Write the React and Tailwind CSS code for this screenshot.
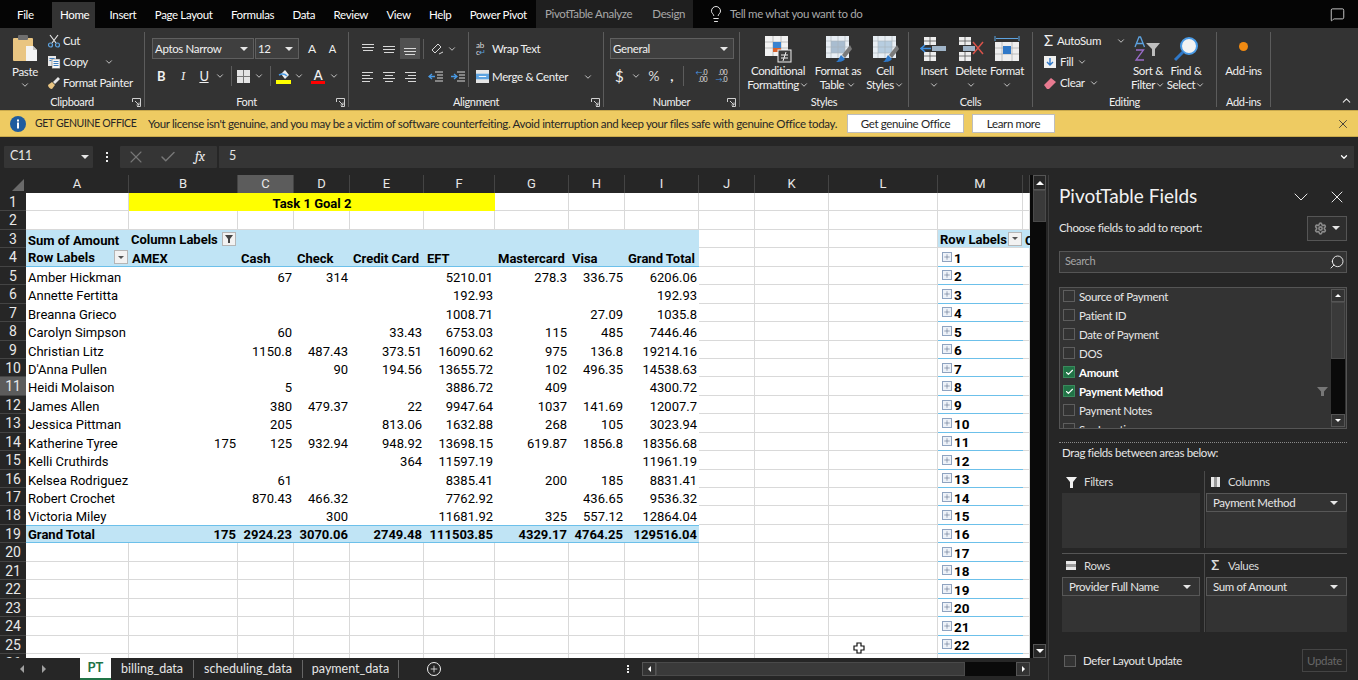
import { ChevronDown, X, Search, Settings, Check, Lightbulb, MessageSquare, ChevronUp, Plus } from 'lucide-react'

const UI = "font-['Lato',sans-serif] tracking-[-0.35px]"
const CELL = "font-['Roboto',sans-serif]"

const COLS = ['A', 'B', 'C', 'D', 'E', 'F', 'G', 'H', 'I', 'J', 'K', 'L', 'M', '']

const PIVOT = [
  ['Amber Hickman', '', '67', '314', '', '5210.01', '278.3', '336.75', '6206.06'],
  ['Annette Fertitta', '', '', '', '', '192.93', '', '', '192.93'],
  ['Breanna Grieco', '', '', '', '', '1008.71', '', '27.09', '1035.8'],
  ['Carolyn Simpson', '', '60', '', '33.43', '6753.03', '115', '485', '7446.46'],
  ['Christian Litz', '', '1150.8', '487.43', '373.51', '16090.62', '975', '136.8', '19214.16'],
  ["D'Anna Pullen", '', '', '90', '194.56', '13655.72', '102', '496.35', '14538.63'],
  ['Heidi Molaison', '', '5', '', '', '3886.72', '409', '', '4300.72'],
  ['James Allen', '', '380', '479.37', '22', '9947.64', '1037', '141.69', '12007.7'],
  ['Jessica Pittman', '', '205', '', '813.06', '1632.88', '268', '105', '3023.94'],
  ['Katherine Tyree', '175', '125', '932.94', '948.92', '13698.15', '619.87', '1856.8', '18356.68'],
  ['Kelli Cruthirds', '', '', '', '364', '11597.19', '', '', '11961.19'],
  ['Kelsea Rodriguez', '', '61', '', '', '8385.41', '200', '185', '8831.41'],
  ['Robert Crochet', '', '870.43', '466.32', '', '7762.92', '', '436.65', '9536.32'],
  ['Victoria Miley', '', '', '300', '', '11681.92', '325', '557.12', '12864.04'],
]
const TOTALS = ['Grand Total', '175', '2924.23', '3070.06', '2749.48', '111503.85', '4329.17', '4764.25', '129516.04']
const HEADS = ['Row Labels', 'AMEX', 'Cash', 'Check', 'Credit Card', 'EFT', 'Mastercard', 'Visa', 'Grand Total']

const FIELDS = [
  ['Source of Payment', false],
  ['Patient ID', false],
  ['Date of Payment', false],
  ['DOS', false],
  ['Amount', true],
  ['Payment Method', true],
  ['Payment Notes', false],
  ['Svc Location', false],
]

const TABS = ['File', 'Home', 'Insert', 'Page Layout', 'Formulas', 'Data', 'Review', 'View', 'Help', 'Power Pivot']

function Caret({ className = '' }) {
  return <ChevronDown size={10} strokeWidth={2} className={`text-[#e0e0e0] shrink-0 ${className}`} />
}

function Tri({ className = '' }) {
  return <span className={`inline-block w-0 h-0 border-x-[4px] border-x-transparent border-t-[4px] border-t-[#e6e6e6] ${className}`} />
}

function Launcher() {
  return (
    <svg width="9" height="9" viewBox="0 0 9 9" fill="none" stroke="#cfcfcf" className="shrink-0">
      <path d="M.5 4V.5H8.5V8.5H5M3 3l4 4M7 4.5V7H4.5" />
    </svg>
  )
}

function Group({ label, launcher, className, children }) {
  return (
    <div className={`flex flex-col h-full border-r border-[#5c5c5c] shrink-0 ${className}`}>
      <div className="flex-1 flex min-h-0">{children}</div>
      <div className="h-[10px] relative flex items-center justify-center text-[11px] text-[#f0f0f0]">
        {label}
        {launcher && <span className="absolute right-[3px] top-[1px] flex"><Launcher /></span>}
      </div>
    </div>
  )
}

function ClipboardIcon() {
  return (
    <svg width="26" height="28" viewBox="0 0 26 28">
      <rect x="1" y="4" width="20" height="23" rx="1" fill="#e9c582" />
      <rect x="6" y="1" width="10" height="5" rx="1" fill="#6f6f6f" />
      <path d="M14 12h7l4 4v11H14z" fill="#f4f4f4" />
      <path d="M21 12v4h4" fill="#c4c4c4" />
    </svg>
  )
}

function CutIcon() {
  return (
    <svg width="14" height="14" viewBox="0 0 14 14" fill="none">
      <path d="M3 1l6 8M11 1L5 9" stroke="#e4e4e4" strokeWidth="1.2" />
      <circle cx="3.5" cy="11" r="2" stroke="#5da3e0" strokeWidth="1.2" />
      <circle cx="10.5" cy="11" r="2" stroke="#5da3e0" strokeWidth="1.2" />
    </svg>
  )
}

function CopyIcon() {
  return (
    <svg width="14" height="14" viewBox="0 0 14 14">
      <rect x="1" y="1" width="8" height="10" fill="#e8e8e8" />
      <rect x="5" y="4" width="8" height="9.5" fill="#f8f8f8" stroke="#555" strokeWidth=".5" />
      <path d="M2.5 3.5h5M2.5 5.5h2M6.5 6.5h5M6.5 8.5h5M6.5 10.5h5" stroke="#3f7fbf" />
    </svg>
  )
}

function PainterIcon() {
  return (
    <svg width="14" height="14" viewBox="0 0 14 14">
      <path d="M1 9l4-3 3 3-3 4c-2 0-4-2-4-4z" fill="#e9c582" />
      <path d="M6 6l5-5 2 2-5 5z" fill="#e6e6e6" />
    </svg>
  )
}

function AlignLines({ widths, y = 3, gap = 3, color = '#d8d8d8' }) {
  return (
    <svg width="16" height="16" viewBox="0 0 16 16" stroke={color}>
      {widths.map(([a, b], i) => <path key={i} d={`M${a} ${y + i * gap + 0.5}H${b}`} />)}
    </svg>
  )
}

function IconBtn({ children, className = '' }) {
  return <div className={`w-[20px] h-[21px] flex items-center justify-center shrink-0 ${className}`}>{children}</div>
}

function CondFormatIcon() {
  return (
    <svg width="28" height="28" viewBox="0 0 28 28">
      <rect x="1" y="1" width="23" height="20" fill="#f2f2f2" />
      <path d="M1 7h23M1 13h23M9 1v20M17 1v20" stroke="#a9a9a9" strokeWidth=".7" />
      <rect x="9" y="7" width="8" height="6" fill="#3a83d0" />
      <rect x="9" y="13" width="8" height="4" fill="#d9622c" />
      <rect x="14" y="15" width="13" height="12" fill="#3c3c3c" stroke="#eee" />
      <path d="M17 20h7M17 23h7M22 17l-3 9" stroke="#eee" />
    </svg>
  )
}

function TableBrushIcon({ fill }) {
  return (
    <svg width="28" height="28" viewBox="0 0 28 28">
      <rect x="2" y="1" width="23" height="22" fill="#e8eef4" />
      <rect x="7" y="6" width="14" height="12" fill={fill} />
      <path d="M2 6h23M2 12h23M2 18h23M7 1v22M14 1v22M21 1v22" stroke="#a9b2bb" strokeWidth=".6" />
      <path d="M26 10l-8 10 3 3 7-9z" fill="#7a7a7a" />
      <path d="M17 20l4 4c-2 3-6 3-9 3 2-1 3-4 5-7z" fill="#2f78c8" />
    </svg>
  )
}

function InsertIcon() {
  return (
    <svg width="28" height="28" viewBox="0 0 28 28">
      <path d="M4 2h12v8H4zM4 17h12v9H4z" fill="#eeeeee" />
      <path d="M4 6h12M10 2v8M4 21h12M10 17v9" stroke="#555" strokeWidth=".8" />
      <rect x="12" y="11" width="14" height="5" fill="#9fb4c8" />
      <path d="M1 13.5h10M5 10l-4 3.5L5 17" stroke="#3e8ede" strokeWidth="1.6" fill="none" />
    </svg>
  )
}

function DeleteIcon() {
  return (
    <svg width="28" height="28" viewBox="0 0 28 28">
      <path d="M2 2h12v8H2zM2 17h12v9H2z" fill="#eeeeee" />
      <path d="M2 6h12M8 2v8M2 21h12M8 17v9" stroke="#555" strokeWidth=".8" />
      <rect x="6" y="11" width="12" height="5" fill="#9fb4c8" />
      <path d="M16 7l10 12M26 7L16 19" stroke="#d9534a" strokeWidth="1.5" />
    </svg>
  )
}

function FormatIcon() {
  return (
    <svg width="28" height="28" viewBox="0 0 28 28">
      <path d="M2 1v5M26 1v5M3 3.5h22" stroke="#5da3e0" fill="none" />
      <rect x="2" y="7" width="24" height="19" fill="#eeeeee" />
      <path d="M2 13h24M2 19h24M9 7v19M19 7v19" stroke="#a9a9a9" strokeWidth=".7" />
      <rect x="10" y="11" width="8" height="8" fill="#2f78c8" />
    </svg>
  )
}

function SortIcon() {
  return (
    <svg width="28" height="26" viewBox="0 0 28 26" className="shrink-0">
      <path d="M1 11L5 1h1.5l4 10M2.7 7.5h6" fill="none" stroke="#5da3e0" strokeWidth="1.3" />
      <path d="M2 14h7.5L2 24h8" fill="none" stroke="#9a6cc8" strokeWidth="1.3" />
      <path d="M12 7h14l-5 6v7h-3v-7z" fill="#bdbdbd" />
    </svg>
  )
}

function FindIcon() {
  return (
    <svg width="26" height="26" viewBox="0 0 26 26" className="shrink-0">
      <circle cx="16" cy="10" r="8" fill="#f2f2f2" stroke="#4a9be6" strokeWidth="2" />
      <path d="M10 16l-8 8" stroke="#2f78c8" strokeWidth="3" />
    </svg>
  )
}

function Ribbon() {
  return (
    <div className={`h-[82px] bg-[#333333] flex pt-[4px] pb-[3px] text-[#f0f0f0] text-[11.5px] leading-[14px] ${UI}`}>
      <Group label="Clipboard" launcher className="w-[145px]">
        <div className="w-[50px] flex flex-col items-center pt-[2px]">
          <ClipboardIcon />
          <div className="mt-[3px]">Paste</div>
          <Caret className="mt-[1px]" />
        </div>
        <div className="flex flex-col pt-[1px] gap-[6px] -ml-[3px]">
          <div className="flex items-center gap-[2px] h-[15px]"><CutIcon />Cut</div>
          <div className="flex items-center gap-[2px] h-[15px]"><CopyIcon />Copy<Caret className="ml-[14px]" /></div>
          <div className="flex items-center gap-[2px] h-[15px]"><PainterIcon />Format Painter</div>
        </div>
      </Group>

      <Group label="Font" launcher className="w-[204px]">
        <div className="flex flex-col pl-[7px] pt-[6px]">
          <div className="flex items-center gap-[1px]">
            <div className="w-[102px] h-[21px] bg-[#3f3f3f] border border-[#5f5f5f] flex items-center justify-between px-[2px] pr-[5px]">Aptos Narrow<Tri /></div>
            <div className="w-[44px] h-[21px] bg-[#3f3f3f] border border-[#5f5f5f] flex items-center justify-between px-[2px] pr-[5px]">12<Tri /></div>
            <span className="ml-[8px] text-[12px]">A</span>
            <span className="ml-[12px] text-[11px]">A</span>
          </div>
          <div className="flex items-center mt-[7px] h-[20px] text-[13px]">
            <span className="w-[18px] text-center font-bold">B</span>
            <span className="w-[26px] text-center italic font-serif">I</span>
            <span className="w-[16px] text-center underline">U</span>
            <Caret className="ml-[3px]" />
            <span className="w-px h-[20px] bg-[#5c5c5c] ml-[6px] mr-[5px]" />
            <svg width="13" height="13" viewBox="0 0 13 13"><rect width="13" height="13" fill="#e4e4e4" /><path d="M6.5 0v13M0 6.5h13" stroke="#777" /></svg>
            <Caret className="ml-[4px]" />
            <span className="w-px h-[20px] bg-[#5c5c5c] ml-[6px] mr-[5px]" />
            <svg width="16" height="16" viewBox="0 0 16 16"><path d="M5 6l4-4 4 5-4 4z" fill="#eee" /><path d="M3 7c4-2 6-1 8 1" stroke="#4a9be6" strokeWidth="1.5" fill="none" /><rect y="12" width="15" height="4" fill="#ffff00" /></svg>
            <Caret className="ml-[2px]" />
            <span className="ml-[7px] flex flex-col items-center w-[14px] leading-[12px] font-semibold text-[13px]">A<span className="w-[14px] h-[3px] bg-[#ff0000]" /></span>
            <Caret className="ml-[4px]" />
          </div>
        </div>
      </Group>

      <Group label="Alignment" launcher className="w-[255px]">
        <div className="w-[120px] flex flex-col pl-[9px] pt-[6px] h-[55px] border-r border-[#5c5c5c]">
          <div className="flex items-center h-[21px]">
            <IconBtn><AlignLines widths={[[2, 14], [2, 14], [3, 13]]} y={3} /></IconBtn>
            <IconBtn className="ml-[1px]"><AlignLines widths={[[2, 14], [2, 14], [3, 13]]} y={5} /></IconBtn>
            <IconBtn className="ml-[1px] bg-[#505050]"><AlignLines widths={[[2, 14], [2, 14], [3, 13]]} y={7} /></IconBtn>
            <span className="w-px h-[20px] bg-[#5c5c5c] mx-[3px]" />
            <IconBtn>
              <svg width="16" height="16" viewBox="0 0 16 16" fill="none" stroke="#d8d8d8"><path d="M3 9l6-6 3 3-6 6zM10 13l4-2" /></svg>
            </IconBtn>
            <Caret />
          </div>
          <div className="flex items-center h-[21px] mt-[7px]">
            <IconBtn><AlignLines widths={[[2, 13], [2, 10], [2, 13], [2, 10]]} y={3} gap={3} /></IconBtn>
            <IconBtn className="ml-[1px]"><AlignLines widths={[[2, 14], [4, 12], [2, 14], [4, 12]]} y={3} gap={3} /></IconBtn>
            <IconBtn className="ml-[1px]"><AlignLines widths={[[3, 14], [6, 14], [3, 14], [6, 14]]} y={3} gap={3} /></IconBtn>
            <span className="w-px h-[20px] bg-[#5c5c5c] mx-[3px]" />
            <IconBtn>
              <svg width="16" height="16" viewBox="0 0 16 16" fill="none"><path d="M7 3h8M9 6h6M9 9h6M7 12h8" stroke="#d8d8d8" /><path d="M1 7.5h6M4 5L1 7.5 4 10" stroke="#4a9be6" strokeWidth="1.3" /></svg>
            </IconBtn>
            <IconBtn className="ml-[2px]">
              <svg width="16" height="16" viewBox="0 0 16 16" fill="none"><path d="M7 3h8M9 6h6M9 9h6M7 12h8" stroke="#d8d8d8" /><path d="M1 7.5h6M4 5l3 2.5L4 10" stroke="#4a9be6" strokeWidth="1.3" /></svg>
            </IconBtn>
          </div>
        </div>
        <div className="flex flex-col pl-[7px] pt-[6px]">
          <div className="flex items-center h-[21px] gap-[3px] whitespace-nowrap">
            <span className="text-[8px] leading-[7px] w-[13px] text-[#dcdcdc]">ab<br />c<span className="text-[#5da3e0]">↵</span></span>
            Wrap Text
          </div>
          <div className="flex items-center h-[21px] mt-[7px] gap-[3px] whitespace-nowrap">
            <svg width="13" height="13" viewBox="0 0 14 14"><rect width="14" height="14" fill="#e6e6e6" /><rect y="4" width="14" height="6" fill="#5da3e0" /><path d="M3 7h8" stroke="#fff" /></svg>
            Merge &amp; Center
            <Caret className="ml-[12px]" />
          </div>
        </div>
      </Group>

      <Group label="Number" launcher className="w-[136px]">
        <div className="flex flex-col pl-[6px] pt-[6px]">
          <div className="w-[124px] h-[21px] bg-[#3f3f3f] border border-[#5f5f5f] flex items-center justify-between px-[2px] pr-[5px]">General<Tri /></div>
          <div className="flex items-center mt-[7px] h-[20px] text-[14px]">
            <span className="ml-[5px] text-[15px]">$</span>
            <Caret className="ml-[8px]" />
            <span className="ml-[7px] text-[#dcdcdc]">%</span>
            <span className="ml-[11px] font-bold">,</span>
            <span className="w-px h-[20px] bg-[#5c5c5c] mx-[10px]" />
            <span className="text-[7px] leading-[7px] text-[#e4e4e4] w-[13px] text-right"><span className="text-[#4a9be6]">←</span>.0<br />.00</span>
            <span className="text-[7px] leading-[7px] text-[#e4e4e4] w-[13px] ml-[7px] text-right">.00<br /><span className="text-[#4a9be6]">→</span>.0</span>
          </div>
        </div>
      </Group>

      <Group label="Styles" className="w-[169px]">
        <div className="flex w-full pt-[3px] text-center">
          <div className="w-[62px] ml-[7px] flex flex-col items-center"><CondFormatIcon /><div className="mt-[1px]">Conditional</div><div className="flex items-center whitespace-nowrap">Formatting<Caret /></div></div>
          <div className="w-[52px] flex flex-col items-center ml-[3px]"><TableBrushIcon fill="#a9bdd0" /><div className="mt-[1px] whitespace-nowrap">Format as</div><div className="flex items-center">Table<Caret className="ml-[2px]" /></div></div>
          <div className="w-[42px] flex flex-col items-center"><TableBrushIcon fill="#b7cde0" /><div className="mt-[1px]">Cell</div><div className="flex items-center">Styles<Caret /></div></div>
        </div>
      </Group>

      <Group label="Cells" className="w-[124px]">
        <div className="flex pt-[3px] pl-[6px] text-center">
          <div className="w-[38px] flex flex-col items-center"><InsertIcon /><div className="mt-[1px]">Insert</div><Caret className="mt-[2px]" /></div>
          <div className="w-[36px] flex flex-col items-center"><DeleteIcon /><div className="mt-[1px]">Delete</div><Caret className="mt-[2px]" /></div>
          <div className="w-[36px] flex flex-col items-center"><FormatIcon /><div className="mt-[1px]">Format</div><Caret className="mt-[2px]" /></div>
        </div>
      </Group>

      <Group label="Editing" className="w-[184px]">
        <div className="flex w-full pl-[11px]">
          <div className="flex flex-col w-[82px] pt-[1px] gap-[6px]">
            <div className="flex items-center gap-[4px] h-[15px]">
              <span className="text-[15px] w-[12px] leading-none">Σ</span>AutoSum<Caret className="ml-[11px]" />
            </div>
            <div className="flex items-center gap-[4px] h-[15px]">
              <svg width="12" height="12" viewBox="0 0 12 12"><rect width="12" height="12" fill="#f0f0f0" /><path d="M6 2v7M3 6l3 3 3-3" stroke="#2f78c8" strokeWidth="1.4" fill="none" /></svg>
              Fill<Caret />
            </div>
            <div className="flex items-center gap-[4px] h-[15px]">
              <svg width="12" height="12" viewBox="0 0 12 12"><path d="M0 8l7-7 5 4-7 7H3z" fill="#e87a90" /></svg>
              Clear<Caret />
            </div>
          </div>
          <div className="w-[44px] flex flex-col items-center pt-[4px] text-center">
            <SortIcon />
            <div className="mt-[2px] whitespace-nowrap">Sort &amp;</div>
            <div className="flex items-center">Filter<Caret /></div>
          </div>
          <div className="w-[38px] flex flex-col items-center pt-[4px] -ml-[3px] text-center">
            <FindIcon />
            <div className="mt-[2px] whitespace-nowrap">Find &amp;</div>
            <div className="flex items-center">Select<Caret /></div>
          </div>
        </div>
      </Group>

      <Group label="Add-ins" className="w-[54px]">
        <div className="flex flex-col items-center w-full pt-[10px]">
          <span className="w-[9px] h-[9px] rounded-full bg-[#f08a12]" />
          <div className="mt-[13px] whitespace-nowrap">Add-ins</div>
        </div>
      </Group>

      <div className="flex-1 flex items-end justify-end pr-[5px]">
        <ChevronUp size={13} className="text-[#e6e6e6]" />
      </div>
    </div>
  )
}

function Banner() {
  return (
    <div className={`h-[27px] bg-[#eecb62] border-y border-[#c9a94c] flex items-center text-[11.5px] text-[#262626] ${UI}`}>
      <svg width="16" height="16" viewBox="0 0 16 16" className="ml-[10px] shrink-0">
        <circle cx="8" cy="8" r="8" fill="#1f5c9e" />
        <rect x="7" y="6.5" width="2" height="6" fill="#fff" />
        <rect x="7" y="3.5" width="2" height="2" fill="#fff" />
      </svg>
      <span className="ml-[9px] w-[113px] whitespace-nowrap text-[10.5px]">GET GENUINE OFFICE</span>
      <span className="w-[699px] whitespace-nowrap overflow-hidden">Your license isn't genuine, and you may be a victim of software counterfeiting. Avoid interruption and keep your files safe with genuine Office today.</span>
      <button className="w-[117px] h-[19px] bg-white border border-[#bdbdbd] text-center">Get genuine Office</button>
      <button className="ml-[8px] w-[83px] h-[19px] bg-white border border-[#bdbdbd] text-center">Learn more</button>
      <X size={14} strokeWidth={1.5} className="ml-auto mr-[8px] text-[#333]" />
    </div>
  )
}

function FormulaBar() {
  return (
    <div className={`h-[38px] bg-[#262626] flex items-center pt-[1px] text-[12.5px] text-[#e6e6e6] ${UI}`}>
      <div className="w-[89px] h-[22px] ml-[4px] bg-[#353535] flex items-center justify-between pl-[6px] pr-[4px] rounded-[1px]">C11<Tri /></div>
      <div className="w-[27px] flex flex-col items-center">
        <span className="w-[2px] h-[2px] bg-[#eee] my-[1px]" />
        <span className="w-[2px] h-[2px] bg-[#eee] my-[1px]" />
        <span className="w-[2px] h-[2px] bg-[#eee] my-[1px]" />
      </div>
      <div className="w-[97px] h-[22px] bg-[#353535] flex items-center pl-[6px] rounded-[1px]">
        <X size={20} strokeWidth={1.3} className="text-[#777]" />
        <Check size={18} strokeWidth={2} className="ml-[13px] text-[#777]" />
        <span className="ml-[18px] font-serif italic text-[14px] text-[#eee]">fx</span>
      </div>
      <div className="flex-1 h-[22px] ml-[2px] mr-[4px] bg-[#353535] flex items-center pl-[10px] justify-between pr-[5px]">
        5
        <ChevronDown size={10} strokeWidth={3} className="text-white" />
      </div>
    </div>
  )
}

// one spreadsheet cell, grid lines are on by default
function Cell({ className = 'border-r border-b border-[#d9d9d9]', children }) {
  return <div className={`overflow-hidden whitespace-nowrap px-[2px] leading-[21px] ${className}`}>{children}</div>
}

function HeaderBtn({ filtered }) {
  return (
    <span className="w-[14px] h-[14px] -mt-[2px] bg-[#f2f2f2] border border-[#b5b5b5] flex items-center justify-center shrink-0">
      {filtered ? (
        <svg width="10" height="10" viewBox="0 0 10 10"><path d="M1 1h8L6 5v4H4V5z" fill="#444" /></svg>
      ) : (
        <span className="w-0 h-0 border-x-[3px] border-x-transparent border-t-[3px] border-t-[#555]" />
      )}
    </span>
  )
}

function PlusBox() {
  return (
    <span className="w-[10px] h-[10px] -mt-[2px] border border-[#8fa3c0] bg-[#eef2f8] shrink-0 mr-[2px] ml-[4px] flex items-center justify-center">
      <Plus size={8} strokeWidth={1.5} className="text-[#43567a]" />
    </span>
  )
}

function RowHead({ n }) {
  const on = n === 11
  return (
    <div className={`border-b border-[#444] text-center text-[14px] leading-[19px] text-[#e8e8e8] ${on ? 'bg-[#5c5c5c]' : 'bg-[#262626]'}`}>{n}</div>
  )
}

const BLANK_CELLS = [9, 10, 11]

function RightPart({ n }) {
  // columns J K L, then the second pivot in M and the sliver of N
  const m =
    n === 3 ? (
      <div className="bg-[#c0e4f5] border-b border-[#d9d9d9] flex items-center justify-between pt-[2px] pl-[2px] pr-[1px] font-bold">Row Labels<HeaderBtn /></div>
    ) : n >= 4 ? (
      <div className="border-b border-[#6cc0ea] flex items-center pt-[2px] font-bold text-[13.5px]"><PlusBox />{n - 3}</div>
    ) : (
      <Cell />
    )
  return (
    <>
      {BLANK_CELLS.map(c => <Cell key={c} />)}
      {m}
      {n === 3 ? <div className="bg-[#c0e4f5] font-bold leading-[21px] pl-[2px] overflow-hidden">C</div> : <Cell />}
    </>
  )
}

function Sheet() {
  const rows = []
  rows.push(
    <RowHead key="h1" n={1} />,
    <Cell key="a1" />,
    <div key="t1" className="col-span-5 bg-[#ffff00] text-center font-bold leading-[21px]">Task 1 Goal 2</div>,
    <Cell key="g1" />, <Cell key="h1c" />, <Cell key="i1" />,
    <RightPart key="r1" n={1} />,
  )
  rows.push(<RowHead key="h2" n={2} />)
  for (let c = 0; c < 9; c++) rows.push(<Cell key={`c2${c}`} />)
  rows.push(<RightPart key="r2" n={2} />)

  rows.push(
    <RowHead key="h3" n={3} />,
    <Cell key="a3" className="bg-[#c0e4f5] font-bold">Sum of Amount</Cell>,
    <div key="b3" className="col-span-8 bg-[#c0e4f5] font-bold pt-[2px] pl-[2px] flex items-center gap-[4px]">Column Labels<HeaderBtn filtered /></div>,
    <RightPart key="r3" n={3} />,
  )
  rows.push(<RowHead key="h4" n={4} />)
  HEADS.forEach((h, i) => rows.push(
    i === 0 ? (
      <div key={h + i} className="bg-[#c0e4f5] border-b border-[#6cc0ea] font-bold pt-[2px] pl-[2px] pr-[1px] flex items-center justify-between">{h}<HeaderBtn /></div>
    ) : (
      <Cell key={h + i} className="bg-[#c0e4f5] border-b border-[#6cc0ea] font-bold pl-[3px]">{h}</Cell>
    )
  ))
  rows.push(<RightPart key="r4" n={4} />)

  PIVOT.forEach((row, r) => {
    const n = r + 5
    rows.push(<RowHead key={`h${n}`} n={n} />)
    row.forEach((v, i) => rows.push(
      <Cell key={`${n}-${i}`} className={i === 0 ? '' : 'text-right'}>{v}</Cell>
    ))
    rows.push(<RightPart key={`r${n}`} n={n} />)
  })

  rows.push(<RowHead key="h19" n={19} />)
  TOTALS.forEach((v, i) => rows.push(
    <div key={`t${i}`} className={`bg-[#c0e4f5] border-y border-[#6cc0ea] font-bold leading-[17px] px-[2px] whitespace-nowrap ${i === 0 ? '' : 'text-right'}`}>{v}</div>
  ))
  rows.push(<RightPart key="r19" n={19} />)

  for (let n = 20; n <= 26; n++) {
    rows.push(<RowHead key={`h${n}`} n={n} />)
    for (let c = 0; c < 9; c++) rows.push(<Cell key={`${n}c${c}`} />)
    rows.push(<RightPart key={`r${n}`} n={n} />)
  }

  return (
    <div className={`relative w-[1030px] h-[483px] overflow-hidden bg-white shrink-0 ${CELL}`}>
      <div className="grid grid-cols-[26px_103px_109px_56px_56px_74px_71px_74px_56px_74px_56px_74px_109px_85px_7px] auto-rows-[18px] h-[18px] bg-[#262626] text-[13px] leading-[18px] text-[#e8e8e8] text-center">
        <div className="flex items-end justify-end pr-[2px] pb-[2px]">
          <span className="w-0 h-0 border-l-[12px] border-l-transparent border-b-[12px] border-b-[#6a6a6a]" />
        </div>
        {COLS.map(c => (
          <div key={c} className={`border-r border-[#444] overflow-hidden ${c === 'C' ? 'bg-[#5c5c5c]' : ''}`}>{c}</div>
        ))}
      </div>
      <div className="grid grid-cols-[26px_103px_109px_56px_56px_74px_71px_74px_56px_74px_56px_74px_109px_85px_7px] auto-rows-[18.44px] text-[13px] text-black">
        {rows}
      </div>
      <svg width="12" height="12" viewBox="0 0 12 12" className="absolute left-[853px] top-[467px]">
        <path d="M4 1h4v3h3v4H8v3H4V8H1V4h3z" fill="#fff" stroke="#111" strokeWidth="1.2" />
      </svg>
    </div>
  )
}

function VScroll() {
  return (
    <div className="w-[18px] bg-[#262626] flex shrink-0">
      <span className="w-[3px] bg-[#0a0a0a]" />
      <div className="w-[13px] bg-[#0a0a0a] flex flex-col">
        <div className="h-[15px] bg-[#262626] border border-[#555] flex items-center justify-center">
          <span className="w-0 h-0 border-x-[4px] border-x-transparent border-b-[4px] border-b-white" />
        </div>
        <div className="h-[32px] bg-[#3a3a3a] border border-[#4a4a4a]" />
        <div className="flex-1" />
        <div className="h-[14px] bg-[#262626] border border-[#555] flex items-center justify-center">
          <span className="w-0 h-0 border-x-[4px] border-x-transparent border-t-[4px] border-t-white" />
        </div>
      </div>
    </div>
  )
}

function AreaField({ label }) {
  return (
    <div className="h-[19px] bg-[#333] border border-[#575757] flex items-center justify-between pl-[6px] pr-[8px] text-[11.5px]">
      {label}<Tri />
    </div>
  )
}

function Area({ icon, label, field, head = 'h-[22px]' }) {
  return (
    <div className="flex flex-col">
      <div className={`${head} flex items-center gap-[7px] pl-[3px] text-[11.5px] text-[#dcdcdc]`}>
        <span className="w-[12px] flex justify-center">{icon}</span>{label}
      </div>
      <div className="h-[55px] bg-[#333333]">
        {field && <AreaField label={field} />}
      </div>
    </div>
  )
}

function PivotPanel() {
  return (
    <div className={`w-[310px] shrink-0 bg-[#262626] border-l border-[#3f3f3f] pl-[10px] pr-[11px] text-[#e6e6e6] ${UI}`}>
      <div className="flex items-center justify-between h-[40px] pt-[3px]">
        <span className="text-[19px] text-[#f2f2f2] tracking-normal">PivotTable Fields</span>
        <div className="flex items-center gap-[14px]">
          <ChevronDown size={24} strokeWidth={1} />
          <X size={20} strokeWidth={1.2} />
        </div>
      </div>
      <div className="flex items-center justify-between h-[26px] text-[11.5px]">
        Choose fields to add to report:
        <span className="w-[40px] h-[25px] border border-[#555] bg-[#2e2e2e] flex items-center justify-center gap-[5px]">
          <Settings size={13} strokeWidth={3} className="text-[#8a8a8a]" /><Tri />
        </span>
      </div>
      <div className="mt-[10px] h-[22px] bg-[#333] border border-[#555] flex items-center justify-between pl-[5px] pr-[1px] text-[11px] text-[#a5a5a5]">
        <span className="pb-[2px]">Search</span>
        <Search size={16} strokeWidth={1.3} className="text-white scale-x-[-1]" />
      </div>
      <div className="mt-[14px] h-[142px] bg-[#333] border border-[#555] flex overflow-hidden">
        <div className="flex-1 overflow-hidden pl-[3px]">
          {FIELDS.map(([name, on]) => (
            <div key={name} className="relative h-[19px] flex items-center gap-[4px] text-[11.5px] shrink-0">
              {on ? (
                <span className="w-[12px] h-[12px] bg-[#217346] border border-[#3a8a5c] flex items-center justify-center -mt-[3px]">
                  <Check size={9} strokeWidth={3} className="text-white" />
                </span>
              ) : (
                <span className="w-[12px] h-[12px] border border-[#5e5e5e] -mt-[3px]" />
              )}
              <span className={on ? 'font-bold text-white pb-[2px]' : 'pb-[2px]'}>{name}</span>
              {name === 'Payment Method' && (
                <svg width="11" height="11" viewBox="0 0 11 11" className="absolute right-[3px] top-[3px]"><path d="M0 1h11L7 5.5V10H4V5.5z" fill="#777" /></svg>
              )}
            </div>
          ))}
        </div>
        <div className="w-[14px] flex flex-col bg-[#0a0a0a] mr-[1px] mt-[1px] mb-[1px]">
          <div className="h-[13px] bg-[#333] border border-[#555] flex items-center justify-center">
            <span className="w-0 h-0 border-x-[3px] border-x-transparent border-b-[3px] border-b-white" />
          </div>
          <div className="h-[57px] bg-[#3a3a3a] border border-[#4a4a4a]" />
          <div className="flex-1" />
          <div className="h-[13px] bg-[#333] border border-[#555] flex items-center justify-center">
            <span className="w-0 h-0 border-x-[3px] border-x-transparent border-t-[3px] border-t-white" />
          </div>
        </div>
      </div>
      <div className="mt-[13px] border-t border-dotted border-[#8a8a8a]" />
      <div className="h-[20px] flex items-center pl-[3px] text-[11.5px]">Drag fields between areas below:</div>
      <div className="grid grid-cols-[138px_6px_1fr] mt-[8px] pl-[3px]">
        <Area
          label="Filters"
          icon={<svg width="11" height="11" viewBox="0 0 11 11"><path d="M0 0h11L7 5v6H4V5z" fill="#f0f0f0" /></svg>}
        />
        <div className="border-r border-[#4a4a4a] mr-[1px]" />
        <Area
          label="Columns"
          field="Payment Method"
          icon={<svg width="9" height="10" viewBox="0 0 9 10"><rect width="9" height="10" fill="#e8e8e8" /><rect x="3" width="3" height="10" fill="#9a9a9a" /></svg>}
        />
        <div className="col-span-3 border-t border-[#555] mt-[5px]" />
        <Area
          label="Rows"
          head="h-[23px]"
          field="Provider Full Name"
          icon={<svg width="10" height="9" viewBox="0 0 10 9"><rect width="10" height="9" fill="#e8e8e8" /><rect y="3" width="10" height="3" fill="#9a9a9a" /></svg>}
        />
        <div className="border-r border-[#4a4a4a] mr-[1px]" />
        <Area
          label="Values"
          head="h-[23px]"
          field="Sum of Amount"
          icon={<span className="text-[13px] leading-none font-bold">Σ</span>}
        />
      </div>
      <div className="flex items-center justify-between mt-[17px] pl-[5px]">
        <span className="flex items-center gap-[7px] text-[11.5px]">
          <span className="w-[12px] h-[12px] border border-[#5e5e5e] bg-[#333]" />
          Defer Layout Update
        </span>
        <span className="w-[45px] h-[23px] border border-[#444] text-[#666] text-[11.5px] flex items-center justify-center">Update</span>
      </div>
    </div>
  )
}

function SheetTabs() {
  return (
    <div className="h-[22px] bg-[#262626] flex items-stretch text-[12.5px] text-[#e6e6e6] font-['Lato',sans-serif]">
      <div className="w-[80px] flex items-center pl-[20px] gap-[18px]">
        <span className="w-0 h-0 border-y-[4px] border-y-transparent border-r-[4px] border-r-[#a0a0a0]" />
        <span className="w-0 h-0 border-y-[4px] border-y-transparent border-l-[4px] border-l-[#a0a0a0]" />
      </div>
      <div className="w-[31px] bg-white border-b-2 border-[#217346] text-[#217346] font-bold flex items-center justify-center text-[13px]">PT</div>
      <div className="w-[83px] border-r border-[#666] my-[2px] flex items-center justify-center">billing_data</div>
      <div className="w-[109px] border-r border-[#666] my-[2px] flex items-center justify-center">scheduling_data</div>
      <div className="w-[96px] border-r border-[#666] my-[2px] flex items-center justify-center">payment_data</div>
      <div className="ml-[28px] flex items-center">
        <span className="w-[14px] h-[14px] rounded-full border border-[#eee] flex items-center justify-center">
          <Plus size={10} strokeWidth={2} />
        </span>
      </div>
      <div className="w-[188px] flex items-center justify-end">
        <div className="flex flex-col gap-[1px]">
          <span className="w-[2px] h-[2px] bg-[#eee]" />
          <span className="w-[2px] h-[2px] bg-[#eee]" />
          <span className="w-[2px] h-[2px] bg-[#eee]" />
        </div>
      </div>
      <div className="w-[388px] ml-[13px] my-[4px] bg-[#0a0a0a] flex">
        <span className="w-[14px] bg-[#333] border border-[#555] flex items-center justify-center">
          <span className="w-0 h-0 border-y-[3px] border-y-transparent border-r-[3px] border-r-white" />
        </span>
        <span className="w-[309px] bg-[#3a3a3a] border border-[#4a4a4a]" />
        <span className="flex-1" />
        <span className="w-[14px] bg-[#333] border border-[#555] flex items-center justify-center">
          <span className="w-0 h-0 border-y-[3px] border-y-transparent border-l-[3px] border-l-white" />
        </span>
      </div>
    </div>
  )
}

export default function App() {
  return (
    <div className="w-[1358px] h-[680px] overflow-hidden flex flex-col bg-[#262626]">
      <div className={`h-[28px] bg-[#050505] flex items-stretch text-[11.5px] text-white ${UI}`}>
        <div className="w-[536px] flex items-end whitespace-nowrap">
          {TABS.map(t => (
            <div
              key={t}
              className={`h-[26px] flex items-center pb-[1px] ${t === 'Home' ? 'bg-[#333333] w-[46px] pl-[8px]' : 'px-[9.2px]'} ${t === 'File' ? 'w-[54px] pl-[17px]' : ''} ${t === 'Insert' ? 'ml-[5px]' : ''}`}
            >
              {t}
            </div>
          ))}
        </div>
        <div className="w-[157px] flex items-center bg-[#1f1f1f] text-[#a8a8a8] pl-[9px] gap-[20px] whitespace-nowrap">
          <span>PivotTable Analyze</span>
          <span>Design</span>
        </div>
        <div className="flex items-center text-[#a8a8a8] ml-[14px]">
          <Lightbulb size={18} strokeWidth={1.2} className="text-white" />
          <span className="ml-[5px]">Tell me what you want to do</span>
        </div>
        <div className="ml-auto flex items-center pr-[13px]">
          <MessageSquare size={15} strokeWidth={1.2} />
        </div>
      </div>
      <Ribbon />
      <Banner />
      <FormulaBar />
      <div className="flex h-[505px]">
        <div className="w-[1048px] flex flex-col shrink-0">
          <div className="flex h-[483px]">
            <Sheet />
            <VScroll />
          </div>
          <SheetTabs />
        </div>
        <PivotPanel />
      </div>
    </div>
  )
}
